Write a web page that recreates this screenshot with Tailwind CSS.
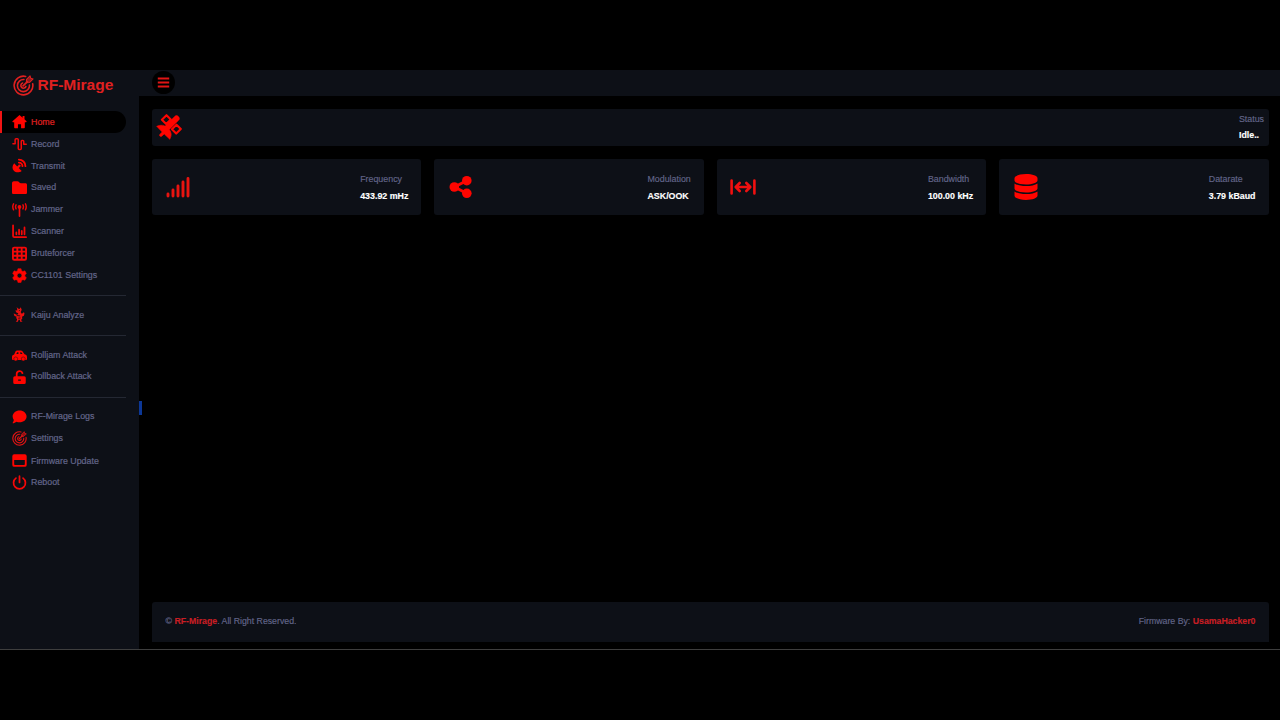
<!DOCTYPE html>
<html lang="en">
<head>
  <meta charset="UTF-8" />
  <meta name="viewport" content="width=device-width, initial-scale=1.0"/>
  <title>RF-Mirage</title>
  <script src="https://cdn.jsdelivr.net/npm/@tailwindcss/browser@4"></script>
</head>
<body class="bg-black h-screen overflow-hidden py-[70px] font-['Liberation_Sans',Arial,sans-serif] text-[8.85px] text-[#63668a]">

  <!-- Shared icons -->
  <svg class="hidden">
    <symbol id="target" viewBox="0 0 24 24">
      <g fill="none" stroke="currentColor" stroke-width="1.8" stroke-linecap="round">
        <path d="M14.5 1.6A10.7 10.7 0 1 0 22.5 10" />
        <path d="M12.5 5.2A6.9 6.9 0 1 0 18.8 11.5" />
        <path d="M11 9.2a3 3 0 1 0 3.8 3.8" />
      </g>
      <path d="M11.5 12.5l5-5" stroke="currentColor" stroke-width="2" stroke-linecap="round" />
      <path d="M15.2 8.8l.3-3.8L19.5 1l.8 2.7 2.7.8-4 4z" fill="currentColor" fill-opacity=".6" stroke="currentColor" stroke-width="1.2" stroke-linejoin="round" />
    </symbol>
  </svg>

  <div class="flex h-[580px] border-b border-[#3e3e3e]">

    <!-- Sidebar -->
    <aside class="w-[139px] shrink-0 bg-[#0d1017]">
      <a href="#" class="flex items-center h-[31px] pl-[12.5px] gap-1 text-[#e02020]">
        <svg class="w-[21px] h-[21px]"><use href="#target" /></svg>
        <h1 class="pb-[2px] text-[15.5px] font-bold leading-none">RF-Mirage</h1>
      </a>

      <nav class="w-[125.5px] pt-[10px] [-webkit-text-stroke:0.2px]">
        <a href="#" class="flex items-center h-[21.85px] pl-[10px] gap-[4px] border-l-2 border-[#f01414] rounded-r-full bg-black text-[#e02020]">
          <svg class="w-[15px] h-[15px] text-[#ff0500]" viewBox="0 0 24 24" fill="currentColor"><path d="M12 1.5L.8 11.5c-.5.6-.2 1.5.7 1.5h2v8.500c0 .8.5 1.300 1.300 1.300h4.700v-6.500h5v6.500h4.700c.8 0 1.300-.5 1.300-1.300V13h2c.9 0 1.200-.9.7-1.500L20 8.500V3h-3v2.800z" /></svg>
          <span class="pt-px">Home</span>
        </a>
        <a href="#" class="flex items-center h-[21.85px] pl-[12px] gap-[4px]">
          <svg class="w-[15px] h-[15px] text-[#f00a0a]" viewBox="0 0 24 24" fill="none" stroke="currentColor" stroke-width="2.4" stroke-linecap="round" stroke-linejoin="round"><path d="M1.500 12.500H5V6q0-1.500 1.500-1.500h2Q10 4.500 10 6v14q0 1.500 1.500 1.500h1.800q1.500 0 1.500-1.500V8.500q0-1.500 1-1.500t1.500 0q1.500 0 1.500 1.500v4.500h4" /></svg>
          <span class="pt-px">Record</span>
        </a>
        <a href="#" class="flex items-center h-[21.85px] pl-[12px] gap-[4px]">
          <svg class="w-[15px] h-[15px] text-[#ff0500]" viewBox="0 0 24 24"><path d="M3.500 8.500C0 13 0 17.500 3 20.500s8 3.500 12.500.2L10.800 16l1.700-1.600a2 2 0 1 0-2.500-2.500L8.300 13.500z" fill="currentColor" /><g fill="none" stroke="currentColor" stroke-width="2.9" stroke-linecap="round"><path d="M11 2.500A10.500 10.500 0 0 1 21.500 13" /><path d="M11 7.300a5.800 5.800 0 0 1 5.800 5.700" /></g></svg>
          <span class="pt-[1.5px]">Transmit</span>
        </a>
        <a href="#" class="flex items-center h-[21.85px] pl-[12px] gap-[4px]">
          <svg class="w-[15px] h-[15px] text-[#ff0500]" viewBox="0 0 24 24" fill="currentColor"><path d="M3 2h5.800c.8 0 1.500.3 2 .9l1.400 1.400c.5.500 1.200.7 2 .7H21.500C23 5 24 6 24 7.500V20c0 1.500-1 2.500-2.500 2.500h-19C1 22.500 0 21.500 0 20V5c0-1.700 1.300-3 3-3z" /></svg>
          <span>Saved</span>
        </a>
        <a href="#" class="flex items-center h-[21.85px] pl-[12px] gap-[4px]">
          <svg class="w-[15px] h-[15px] text-[#f50808]" viewBox="0 0 24 24" fill="none" stroke="currentColor" stroke-width="2.300" stroke-linecap="round"><path d="M2.500 3Q0 7.800 2.500 12.500M6.500 4.500q-1.700 3.300 0 6.500M17.500 4.500q1.700 3.300 0 6.500M21.500 3q2.500 4.800 0 9.500" /><circle cx="12" cy="7.800" r="1.900" fill="currentColor" /><path d="M12 9v13.500" stroke-width="2.700" /></svg>
          <span>Jammer</span>
        </a>
        <a href="#" class="flex items-center h-[21.85px] pl-[12px] gap-[4px]">
          <svg class="w-[15px] h-[15px] text-[#f50808]" viewBox="0 0 24 24" fill="none" stroke="currentColor" stroke-width="2.800" stroke-linecap="round"><path d="M1.700 2v17q0 2 2 2H22.500M7 13.500v3M11.300 9v7.500M15.600 11v5.500M20 5.500v11" /></svg>
          <span>Scanner</span>
        </a>
        <a href="#" class="flex items-center h-[21.85px] pl-[12px] gap-[4px]">
          <svg class="w-[15px] h-[15px] mt-px text-[#f50808]" viewBox="0 0 24 24" fill="none" stroke="currentColor" stroke-width="3"><rect x="1.500" y="2.500" width="21" height="19.500" rx="2" /><path d="M8.500 2.500V22M15.500 2.500V22M1.500 9h21M1.500 15.500h21" /></svg>
          <span class="pt-px">Bruteforcer</span>
        </a>
        <a href="#" class="flex items-center h-[21.85px] pl-[12px] gap-[4px]">
          <svg class="w-[15px] h-[15px] mt-px text-[#ff0500]" viewBox="0 0 24 24"><path d="M9.500 1h5l.7 3.200 2.300 1.300 3.100-1L23 8.800 20.600 11v2.200l2.400 2.200-2.400 4.200-3.100-1-2.300 1.300-.7 3.200h-5l-.7-3.200-2.300-1.300-3.100 1L1 15.400l2.400-2.200V11L1 8.800l2.400-4.300 3.100 1 2.300-1.300zM12 8.300a3.800 3.800 0 1 0 0 7.600 3.800 3.800 0 0 0 0-7.600z" fill="currentColor" fill-rule="evenodd" stroke="currentColor" stroke-width=".8" stroke-linejoin="round" /></svg>
          <span class="pt-px">CC1101 Settings</span>
        </a>

        <hr class="mt-[9px] mb-[8.2px] border-[#242833]" />

        <a href="#" class="flex items-center h-[21.85px] pl-[12px] gap-[4px]">
          <svg class="w-[15px] h-[15px] text-[#e81010]" viewBox="0 0 24 24" fill="currentColor"><path d="M7.500 0l2 2.500 2.500.5 2-2.500 1.500 4-1.500 3.500 1 2.500 2.500-.5 1.500-2 1 2.500-1 3.500-3 1.500.5 3-1.500 1.500v2l2 1.500h-4l-.5-3h-2l-1 3H6l2-2.500v-2L6.500 17.500l1-2-3.500-1-1.500-4 2.500.5 2 1.500 2.500-.5.5-2-3.500-1.500L5.500 5l3 .5z" /><path d="M7.500 13.500l5.500.8M12.500 5.500l-1.500.5M10 18l3.500-.5" stroke="#0d1017" stroke-width="1.300" /></svg>
          <span class="pt-px">Kaiju Analyze</span>
        </a>

        <hr class="mt-[9px] mb-[8.2px] border-[#242833]" />

        <a href="#" class="flex items-center h-[21.85px] pl-[12px] gap-[4px]">
          <svg class="w-[15px] h-[15px] mt-px text-[#ff0500]" viewBox="0 0 24 24"><path d="M3.500 10.500L5.300 6Q6.200 4 8.500 4H14q1.700 0 2.700 1.300L20 9.800q4 .5 4 4.200v3q0 2-1.500 2H1.500Q0 19 0 17v-3.500Q0 11 3.500 10.500zM6.900 9.500h3.400V6.800H8.300zM13.300 9.500h3.600l-2.200-2.700h-1.400z" fill="currentColor" fill-rule="evenodd" /><g fill="currentColor" stroke="#0d1017" stroke-width=".7"><circle cx="6" cy="17.500" r="3.200" /><circle cx="18" cy="17.500" r="3.200" /></g></svg>
          <span class="pt-px">Rolljam Attack</span>
        </a>
        <a href="#" class="flex items-center h-[21.85px] pl-[12px] gap-[4px]">
          <svg class="w-[15px] h-[15px] mt-px text-[#ff0500]" viewBox="0 0 24 24"><path d="M7.500 11V6.500a4.700 4.700 0 0 1 9.200-1.500" fill="none" stroke="currentColor" stroke-width="2.800" stroke-linecap="round" /><path d="M4.500 10h15q2.500 0 2.500 2.500V20q0 2.500-2.500 2.500h-15Q2 22.500 2 20v-7.500Q2 10 4.500 10zM10.500 15q-1 0-1 1t1 1h3q1 0 1-1t-1-1z" fill="currentColor" fill-rule="evenodd" /></svg>
          <span>Rollback Attack</span>
        </a>

        <hr class="mt-[9px] mb-[8.2px] border-[#242833]" />

        <a href="#" class="flex items-center h-[21.85px] pl-[12px] gap-[4px]">
          <svg class="w-[15px] h-[15px] text-[#ff0500]" viewBox="0 0 24 24" fill="currentColor"><path d="M12.200 2.500C18.500 2.500 23.300 6.800 23.300 12s-4.800 9.300-11.100 9.300c-1.800 0-3.500-.3-5-.9C5.500 21.800 3.200 22.800 1.500 22.800c-.5 0-.7-.6-.4-1 1-1.300 1.700-2.900 1.800-4.200C1.700 16 1 14 1 12c0-5.200 4.900-9.500 11.200-9.500z" /></svg>
          <span>RF-Mirage Logs</span>
        </a>
        <a href="#" class="flex items-center h-[21.85px] pl-[12px] gap-[4px]">
          <svg class="w-[15px] h-[15px] text-[#e01414]"><use href="#target" /></svg>
          <span class="pt-px">Settings</span>
        </a>
        <a href="#" class="flex items-center h-[21.85px] pl-[12px] gap-[4px]">
          <svg class="w-[15px] h-[15px] mt-px text-[#ff0500]" viewBox="0 0 24 24" fill="currentColor"><path d="M3.500 2h17Q23.500 2 23.500 5v14q0 3-3 3h-17q-3 0-3-3V5q0-3 3-3zM3.500 11v6.800q0 1.200 1.200 1.200h14.600q1.200 0 1.200-1.200V11z" fill-rule="evenodd" /></svg>
          <span class="pt-[1.5px]">Firmware Update</span>
        </a>
        <a href="#" class="flex items-center h-[21.85px] pl-[12px] gap-[4px]">
          <svg class="w-[15px] h-[15px] text-[#f50808]" viewBox="0 0 24 24" fill="none" stroke="currentColor" stroke-width="2.800" stroke-linecap="round"><path d="M12 1.800v10M6.300 5a9.500 9.500 0 1 0 11.400 0" /></svg>
          <span>Reboot</span>
        </a>
      </nav>
    </aside>

    <!-- Content -->
    <div class="relative flex-1 flex flex-col">
      <div class="absolute left-0 top-[331px] w-[3px] h-[14px] bg-[#0c3796]"></div>

      <header class="h-[26px] bg-[#0d1017] pl-[13px] pb-[2px] flex items-center">
        <button class="w-[23px] h-[23px] rounded-full bg-black flex items-center justify-center">
          <svg class="w-[13px] h-[13px] text-[#e01414]" viewBox="0 0 13 13" stroke="currentColor" stroke-width="2"><path d="M.8 2.500h11.400M.8 6.500h11.400M.8 10.500h11.400" /></svg>
        </button>
      </header>

      <main class="flex-1 flex flex-col gap-[13px] pl-[13px] pr-[11.5px] pt-[13px] [-webkit-text-stroke:0.15px]">
        <div class="h-[37px] rounded-[3px] bg-[#0d1017] flex items-center justify-between pl-[4px] pr-[4.5px] pb-px">
          <svg class="w-[26px] h-[26px] text-[#ff0500]" viewBox="0 0 26 26"><g fill="none" stroke="currentColor" stroke-width="2.100" stroke-linejoin="round"><path d="M10.500 1.200l4.300 4.300-4.600 4.600L5.900 5.800zM20.500 10.700l4.300 4.300-4.600 4.600-4.300-4.300z" /></g><path d="M20.500 4.500L12 13" stroke="currentColor" stroke-width="6" stroke-linecap="round" /><path d="M.7 12.300q6.500-3 11.500 2t1.600 11l-5.600-5.400-2.600 2.400q-1 .5-1.700-.2t-.1-1.700L6.200 18z" fill="currentColor" stroke="currentColor" stroke-width=".6" /></svg>
          <div>
            <p class="leading-4">Status</p>
            <p class="leading-4 font-bold text-white">Idle..</p>
          </div>
        </div>

        <div class="grid grid-cols-4 gap-[13px]">
          <div class="h-[56px] rounded-[3px] bg-[#0d1017] flex items-center justify-between px-[13px]">
            <svg class="w-[26px] h-[26px] text-[#e81410]" viewBox="0 0 26 26" stroke="currentColor" stroke-width="2.900" stroke-linecap="round"><path d="M3 20v2M8 16v6M13 12v10M18 8v14M23 4.500v17.500" /></svg>
            <div>
              <p class="leading-4">Frequency</p>
              <p class="pt-px leading-4 font-bold text-white">433.92 mHz</p>
            </div>
          </div>
          <div class="h-[56px] rounded-[3px] bg-[#0d1017] flex items-center justify-between px-[13px]">
            <svg class="w-[26px] h-[26px] text-[#ff0500]" viewBox="0 0 26 26" fill="currentColor"><path d="M20 6.500L7.500 13 20 19.500" fill="none" stroke="currentColor" stroke-width="2.900" /><circle cx="7.300" cy="13" r="4.800" /><circle cx="19.800" cy="6.700" r="4.800" /><circle cx="19.800" cy="19.300" r="4.800" /></svg>
            <div>
              <p class="leading-4">Modulation</p>
              <p class="pt-px leading-4 font-bold text-white">ASK/OOK</p>
            </div>
          </div>
          <div class="h-[56px] rounded-[3px] bg-[#0d1017] flex items-center justify-between px-[13px]">
            <svg class="w-[26px] h-[26px] text-[#f01010]" viewBox="0 0 26 26" fill="none" stroke="currentColor" stroke-width="2.600" stroke-linecap="round" stroke-linejoin="round"><path d="M1.600 6.500v13M24.400 6.500v13M6 13h14M9.700 9L5.700 13l4 4M16.300 9l4 4-4 4" /></svg>
            <div>
              <p class="leading-4">Bandwidth</p>
              <p class="pt-px leading-4 font-bold text-white">100.00 kHz</p>
            </div>
          </div>
          <div class="h-[56px] rounded-[3px] bg-[#0d1017] flex items-center justify-between pl-[14px] pr-[13px]">
            <svg class="w-[26px] h-[26px] text-[#ff0500]" viewBox="0 0 26 26" fill="currentColor"><path d="M1.500 4.300C1.500 2 6.600.1 13 .1S24.500 2 24.500 4.300v2.200c0 2.300-5.100 4-11.500 4s-11.500-1.700-11.500-4zM1.500 9.500c2.400 1.700 6.700 2.600 11.500 2.600s9.100-.9 11.500-2.600v5c0 2.300-5.100 4-11.500 4s-11.500-1.700-11.500-4zM1.500 17.500c2.400 1.700 6.700 2.600 11.500 2.600s9.100-.9 11.500-2.600v4.300c0 2.300-5.100 4.100-11.500 4.100S1.500 24.100 1.500 21.800z" /></svg>
            <div>
              <p class="leading-4">Datarate</p>
              <p class="pt-px leading-4 font-bold text-white">3.79 kBaud</p>
            </div>
          </div>
        </div>

        <footer class="mt-auto mb-[7px] h-[40px] rounded-t-[3px] bg-[#0d1017] flex items-center justify-between pl-[13.5px] pr-[13px] text-[8.75px]">
          <p>&copy; <a href="#" class="font-bold text-[#c81e24]">RF-Mirage</a>. All Right Reserved.</p>
          <p>Firmware By: <a href="#" class="font-bold text-[#c81e24]">UsamaHacker0</a></p>
        </footer>
      </main>
    </div>
  </div>

</body>
</html>
